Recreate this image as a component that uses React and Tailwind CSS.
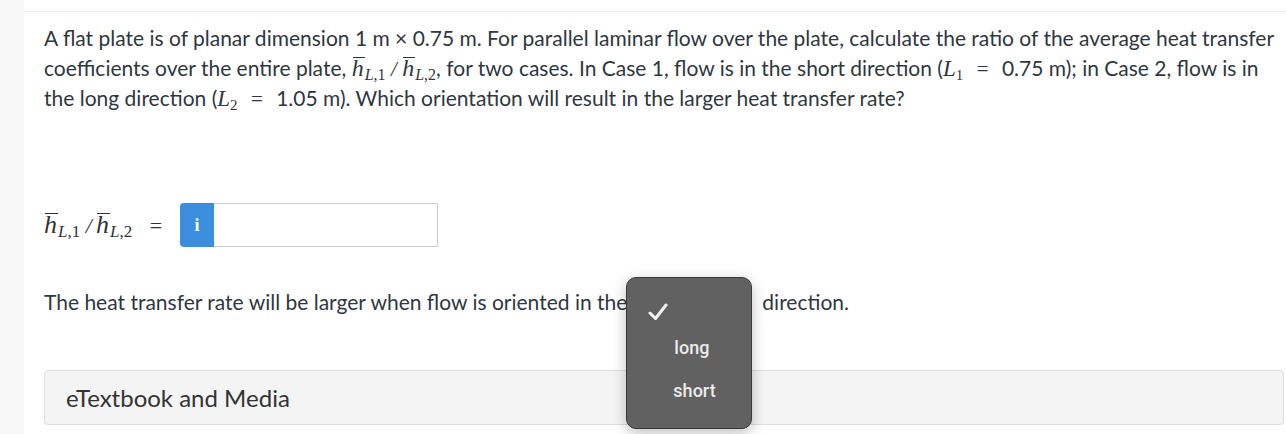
import React from "react";

const serif = { fontFamily: '"Liberation Serif", "Times New Roman", serif' };

function HBar({ sub, size = "text-[24px]", subSize = "text-[16px]" }) {
  return (
    <span className="inline-flex items-baseline" style={serif}>
      <span className={"relative italic leading-none " + size}>
        h
        <span className="absolute left-[1px] right-[-1px] top-[1px] h-[1.3px] bg-current" />
      </span>
      <span className={"relative top-[4px] ml-[1px] " + subSize}>
        <span className="italic">L</span>,{sub}
      </span>
    </span>
  );
}

function LVar({ sub }) {
  return (
    <span style={serif}>
      <span className="italic text-[23px]">L</span>
      <span className="text-[15px] relative top-[4px]">{sub}</span>
    </span>
  );
}

export default function App() {
  return (
    <div
      className="w-[1286px] h-[434px] bg-[#f8f8f8] flex overflow-hidden"
      style={{ fontFamily: 'Lato, "Open Sans", sans-serif' }}
    >
      <div className="w-[24px] shrink-0" />
      <div className="flex-1 bg-white pt-[11px] text-[#2f3740]">
        <div className="border-t border-[#ebebeb] pl-[20px] pt-[11px]">
          <div className="text-[21px] leading-[30px]">
            <div className="whitespace-nowrap h-[30px]">
              A flat plate is of planar dimension 1 m × 0.75 m. For parallel laminar flow over the plate, calculate the ratio of the average heat transfer
            </div>
            <div className="whitespace-nowrap h-[30px]">
              coefficients over the entire plate, <HBar sub="1" />{" "}
              <span style={serif} className="italic">/</span> <HBar sub="2" />, for two cases. In Case 1, flow is in the short direction (
              <LVar sub="1" /> <span style={serif} className="mx-[8px]">=</span> 0.75 m); in Case 2, flow is in
            </div>
            <div className="whitespace-nowrap h-[30px]">
              the long direction (<LVar sub="2" /> <span style={serif} className="mx-[8px]">=</span> 1.05 m). Which orientation will result in the larger heat transfer rate?
            </div>
          </div>

          <div className="flex items-center mt-[90px] h-[44px]">
            <div className="w-[136px] text-[22px] whitespace-nowrap text-[#333]">
              <HBar sub="1" size="text-[26px]" subSize="text-[17px]" />{" "}
              <span style={serif} className="italic mr-[4px]">/</span>
              <HBar sub="2" size="text-[26px]" subSize="text-[17px]" />{" "}
              <span style={serif} className="ml-[12px]">=</span>
            </div>
            <div className="flex h-[44px]">
              <div className="w-[34px] h-[44px] bg-[#3b8ddd] rounded-l-[4px] flex items-center justify-center text-white font-bold text-[18px]" style={serif}>
                i
              </div>
              <div className="w-[224px] h-[44px] border border-[#cccccc] border-l-0 bg-white" />
            </div>
          </div>

          <div className="mt-[40px] text-[21px] leading-[30px] whitespace-nowrap flex items-center">
            <span>The heat transfer rate will be larger when flow is oriented in the</span>
            <span className="relative inline-block w-[126px] h-[30px] ml-[0px] mr-[9px]">
              <div
                className="absolute left-[-1px] top-[-10px] w-[126px] h-[152px] bg-[#616161] rounded-[10px] border border-[#3a3a3a] shadow-[0_4px_14px_rgba(0,0,0,0.25)] text-[#ececec]"
                style={{ fontFamily: 'Roboto, "Noto Sans", sans-serif' }}
              >
                <svg className="absolute left-[21px] top-[25px]" width="20" height="18" viewBox="0 0 20 18">
                  <path d="M2 10 L7.5 15.5 L18 2" fill="none" stroke="#f2f2f2" strokeWidth="3" strokeLinecap="round" strokeLinejoin="round" />
                </svg>
                <div className="absolute left-[47px] top-[58px] text-[18px] font-medium leading-[24px]">long</div>
                <div className="absolute left-[46px] top-[101px] text-[18px] font-medium leading-[24px]">short</div>
              </div>
            </span>
            <span>direction.</span>
          </div>

          <div className="mt-[53px] mr-[2px] h-[55px] bg-[#f4f4f4] border border-[#dddddd] rounded-[4px] flex items-center pl-[21px] text-[24px] text-[#333]">
            eTextbook and Media
          </div>
        </div>
      </div>
    </div>
  );
}
